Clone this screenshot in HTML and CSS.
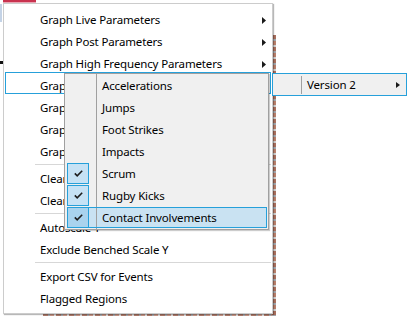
FILE: index.html
```html
<!DOCTYPE html>
<html>
<head>
<meta charset="utf-8">
<link rel="stylesheet" href="styles.css">
</head>
<body>
<div class="screen">
  <div class="menu main">
    <div class="mi"><span class="lbl">Graph Live Parameters</span><svg class="arr" width="4" height="7" viewBox="0 0 4 7"><path d="M0 0L4 3.5L0 7Z"/></svg></div>
    <div class="mi"><span class="lbl">Graph Post Parameters</span><svg class="arr" width="4" height="7" viewBox="0 0 4 7"><path d="M0 0L4 3.5L0 7Z"/></svg></div>
    <div class="mi"><span class="lbl">Graph High Frequency Parameters</span><svg class="arr" width="4" height="7" viewBox="0 0 4 7"><path d="M0 0L4 3.5L0 7Z"/></svg></div>
    <div class="mi open"><span class="lbl">Graph Events</span></div>
    <div class="mi"><span class="lbl">Graph Zones</span></div>
    <div class="mi"><span class="lbl">Graph Markers</span></div>
    <div class="mi"><span class="lbl">Graph Overlays</span></div>
    <div class="sep"></div>
    <div class="mi"><span class="lbl">Clear Events</span></div>
    <div class="mi"><span class="lbl">Clear Markers</span></div>
    <div class="sep"></div>
    <div class="mi"><span class="lbl">Autoscale Y</span></div>
    <div class="mi"><span class="lbl">Exclude Benched Scale Y</span></div>
    <div class="sep"></div>
    <div class="mi"><span class="lbl">Export CSV for Events</span></div>
    <div class="mi"><span class="lbl">Flagged Regions</span></div>
  </div>

  <div class="menu sub1">
    <div class="si"><span class="chk"></span><span class="slbl">Accelerations</span></div>
    <div class="si"><span class="chk"></span><span class="slbl">Jumps</span></div>
    <div class="si"><span class="chk"></span><span class="slbl">Foot Strikes</span></div>
    <div class="si"><span class="chk"></span><span class="slbl">Impacts</span></div>
    <div class="si"><span class="chk on"><svg width="9" height="7" viewBox="0 0 9 7"><polyline points="0.8,3.4 3.2,5.8 8.2,0.8"/></svg></span><span class="slbl">Scrum</span></div>
    <div class="si"><span class="chk on"><svg width="9" height="7" viewBox="0 0 9 7"><polyline points="0.8,3.4 3.2,5.8 8.2,0.8"/></svg></span><span class="slbl">Rugby Kicks</span></div>
    <div class="si hl"><span class="chk on"><svg width="9" height="7" viewBox="0 0 9 7"><polyline points="0.8,3.4 3.2,5.8 8.2,0.8"/></svg></span><span class="slbl">Contact Involvements</span></div>
  </div>

  <div class="menu sub2">
    <span class="vlbl">Version 2</span>
    <svg class="arr2" width="4" height="6" viewBox="0 0 4 6"><path d="M0 0L4 3L0 6Z"/></svg>
  </div>
</div>
</body>
</html>
```
FILE: styles.css
```css
html, body {
  margin: 0;
  padding: 0;
  background: #ffffff;
}

.screen {
  position: relative;
  width: 419px;
  height: 316px;
  overflow: hidden;
  font-family: "Noto Sans", "Open Sans", sans-serif;
  font-size: 11.5px;
  letter-spacing: -0.15px;
  color: #000000;
  background:
    linear-gradient(#c9334f, #c9334f) 3px 0 / 33px 2px no-repeat,
    linear-gradient(#e9a6b4, #e9a6b4) 3px 2px / 33px 1px no-repeat,
    linear-gradient(#c4d3e6, #c4d3e6) 0 4px / 2px 18px no-repeat,
    linear-gradient(#111111, #111111) 0 61px / 4px 3px no-repeat,
    repeating-linear-gradient(180deg, #a9705e 0 4px, #a3a7ad 4px 6px, #b9806c 6px 10px, #d0d0d0 10px 12px) 272px 35px / 4px 281px no-repeat,
    repeating-linear-gradient(90deg, #b07c6c 0 5px, #a4a8ae 5px 7px, #c99888 7px 11px, #e0e0e0 11px 13px) 43px 313px / 232px 3px no-repeat,
    #ffffff;
}

.menu {
  position: absolute;
  box-sizing: border-box;
}

/* main context menu */
.main {
  left: 3px;
  top: 3px;
  width: 270px;
  padding: 2px 0 6px;
  background: #ffffff;
  border: 1px solid #cccccc;
  box-shadow: 1px 1px 1px rgba(0, 0, 0, 0.28);
}

.mi {
  display: flex;
  align-items: center;
  box-sizing: border-box;
  height: 22px;
  margin: 0 1px;
  padding: 6px 4px 0 34px;
  border: 1px solid transparent;
  line-height: 14px;
  white-space: nowrap;
}

.mi .lbl {
  flex: 1;
}

.mi.open {
  border-color: #26a0da;
}

.arr path,
.arr2 path {
  fill: #1a1a1a;
}

.sep {
  height: 1px;
  margin: 4px 1px 0 31px;
  background: #d7d7d7;
}

/* first submenu */
.sub1 {
  left: 64px;
  top: 73px;
  width: 205px;
  padding: 0 0 1px;
  border: 1px solid #a0a0a0;
  background:
    linear-gradient(90deg, transparent 31px, #a0a0a0 31px, #a0a0a0 32px, transparent 32px),
    #f0f0f0;
  box-shadow: 1px 1px 1px rgba(0, 0, 0, 0.2);
}

.si {
  display: flex;
  align-items: center;
  box-sizing: border-box;
  height: 21px;
  margin: 1px 1px 0 2px;
  border: 1px solid transparent;
  white-space: nowrap;
}

.si.hl {
  border-color: #26a0da;
  background:
    linear-gradient(90deg, transparent 28px, #a0a0a0 28px, #a0a0a0 29px, transparent 29px),
    #c9e2f2;
}

.chk {
  box-sizing: border-box;
  width: 22px;
  height: 21px;
  margin: -1px 0 -1px -1px;
  display: flex;
  align-items: center;
  justify-content: center;
  border: 1px solid transparent;
}

.chk.on {
  border-color: #26a0da;
  background: #c6e2f5;
}

.si.hl .chk.on {
  background: #a9d3ee;
}

.chk polyline {
  fill: none;
  stroke: #1e1e1e;
  stroke-width: 1.6;
}

.slbl {
  padding-left: 13px;
  line-height: 14px;
}

/* second submenu */
.sub2 {
  left: 272px;
  top: 73px;
  width: 135px;
  height: 23px;
  display: flex;
  align-items: center;
  padding: 0 6px 0 0;
  border: 1px solid #26a0da;
  background: #f0f0f0;
}

.vlbl {
  flex: 1;
  height: 18px;
  margin-left: 28px;
  padding-left: 5px;
  border-left: 1px solid #a0a0a0;
  line-height: 18px;
}
```
